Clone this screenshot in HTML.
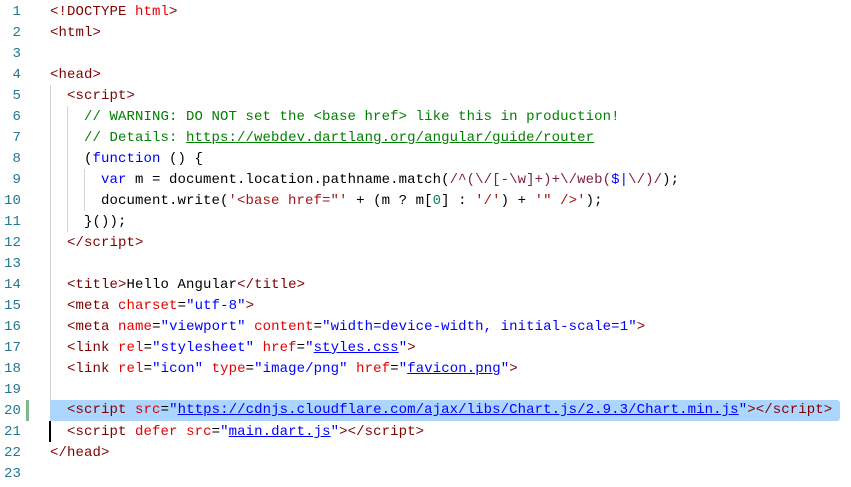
<!DOCTYPE html>
<html><head><style>
body{margin:0;width:851px;height:486px;background:#fff;overflow:hidden;position:relative;font-family:"Liberation Mono",monospace;font-size:14px;letter-spacing:0.1px}
.n{position:absolute;left:0;width:21px;text-align:right;color:#237893;height:21px;line-height:21px}
.l{position:absolute;left:50px;height:21px;line-height:21px;white-space:pre;color:#000}
.g{position:absolute;width:1px;background:#d3d3d3}
.t{color:#800000}.a{color:#e50000}.s{color:#0000ff}.c{color:#008000}.k{color:#0000ff}
.r{color:#811f3f}.j{color:#a31515}.d{color:#098658}
.u{text-decoration:underline}
#w{position:absolute;left:0;top:1px;width:851px;height:486px}
</style></head><body><div id="w">
<div style="position:absolute;left:50px;top:399px;width:790px;height:21px;background:#add6ff;border-radius:0 3px 3px 0"></div>
<div style="position:absolute;left:26px;top:399px;width:3px;height:21px;background:#81b88b"></div>
<div style="position:absolute;left:49px;top:420px;width:2px;height:21px;background:#000"></div>
<div class="g" style="left:50px;top:84px;height:168px"></div>
<div class="g" style="left:67px;top:105px;height:126px"></div>
<div class="g" style="left:84px;top:168px;height:42px"></div>
<div class="g" style="left:50px;top:252px;height:147px"></div>

<div class="n" style="top:1px">1</div><div class="l" style="top:1px"><span class="t">&lt;!DOCTYPE</span> <span class="a">html</span><span class="t">&gt;</span></div>
<div class="n" style="top:22px">2</div><div class="l" style="top:22px"><span class="t">&lt;html&gt;</span></div>
<div class="n" style="top:43px">3</div>
<div class="n" style="top:64px">4</div><div class="l" style="top:64px"><span class="t">&lt;head&gt;</span></div>
<div class="n" style="top:85px">5</div><div class="l" style="top:85px">  <span class="t">&lt;script&gt;</span></div>
<div class="n" style="top:106px">6</div><div class="l" style="top:106px">    <span class="c">// WARNING: DO NOT set the &lt;base href&gt; like this in production!</span></div>
<div class="n" style="top:127px">7</div><div class="l" style="top:127px">    <span class="c">// Details: <span class="u">https://webdev.dartlang.org/angular/guide/router</span></span></div>
<div class="n" style="top:148px">8</div><div class="l" style="top:148px">    (<span class="k">function</span> () {</div>
<div class="n" style="top:169px">9</div><div class="l" style="top:169px">      <span class="k">var</span> m = document.location.pathname.match(<span class="r">/^(\/[-\w]+)+\/web(<span class="s">$</span><span class="s">|</span>\/)/</span>);</div>
<div class="n" style="top:190px">10</div><div class="l" style="top:190px">      document.write(<span class="j">'&lt;base href="'</span> + (m ? m[<span class="d">0</span>] : <span class="j">'/'</span>) + <span class="j">'" /&gt;'</span>);</div>
<div class="n" style="top:211px">11</div><div class="l" style="top:211px">    }());</div>
<div class="n" style="top:232px">12</div><div class="l" style="top:232px">  <span class="t">&lt;/script&gt;</span></div>
<div class="n" style="top:253px">13</div>
<div class="n" style="top:274px">14</div><div class="l" style="top:274px">  <span class="t">&lt;title&gt;</span>Hello Angular<span class="t">&lt;/title&gt;</span></div>
<div class="n" style="top:295px">15</div><div class="l" style="top:295px">  <span class="t">&lt;meta</span> <span class="a">charset</span>=<span class="s">"utf-8"</span><span class="t">&gt;</span></div>
<div class="n" style="top:316px">16</div><div class="l" style="top:316px">  <span class="t">&lt;meta</span> <span class="a">name</span>=<span class="s">"viewport"</span> <span class="a">content</span>=<span class="s">"width=device-width, initial-scale=1"</span><span class="t">&gt;</span></div>
<div class="n" style="top:337px">17</div><div class="l" style="top:337px">  <span class="t">&lt;link</span> <span class="a">rel</span>=<span class="s">"stylesheet"</span> <span class="a">href</span>=<span class="s">"<span class="u">styles.css</span>"</span><span class="t">&gt;</span></div>
<div class="n" style="top:358px">18</div><div class="l" style="top:358px">  <span class="t">&lt;link</span> <span class="a">rel</span>=<span class="s">"icon"</span> <span class="a">type</span>=<span class="s">"image/png"</span> <span class="a">href</span>=<span class="s">"<span class="u">favicon.png</span>"</span><span class="t">&gt;</span></div>
<div class="n" style="top:379px">19</div>
<div class="n" style="top:400px">20</div><div class="l" style="top:399px">  <span class="t">&lt;script</span> <span class="a">src</span>=<span class="s">"<span class="u">https://cdnjs.cloudflare.com/ajax/libs/Chart.js/2.9.3/Chart.min.js</span>"</span><span class="t">&gt;&lt;/script&gt;</span></div>
<div class="n" style="top:421px">21</div><div class="l" style="top:421px">  <span class="t">&lt;script</span> <span class="a">defer</span> <span class="a">src</span>=<span class="s">"<span class="u">main.dart.js</span>"</span><span class="t">&gt;&lt;/script&gt;</span></div>
<div class="n" style="top:442px">22</div><div class="l" style="top:442px"><span class="t">&lt;/head&gt;</span></div>
<div class="n" style="top:463px">23</div>
</div></body></html>
